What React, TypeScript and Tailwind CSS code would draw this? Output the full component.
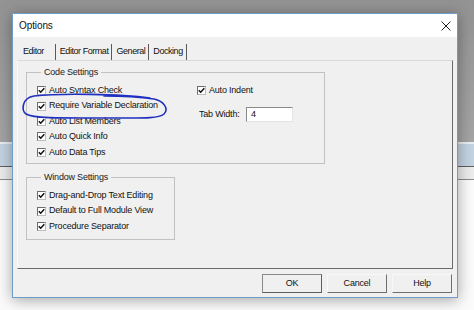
import React from 'react';

const font = { fontFamily: '"Liberation Sans", Arial, sans-serif' };

function Check({ label }: { label: string }) {
  return (
    <div className="flex items-center h-[15.4px]">
      <span className="w-[9px] h-[9px] border border-[#6e6e6e] border-b-[#bdbdbd] border-r-[#bdbdbd] bg-white flex items-center justify-center shrink-0">
        <svg width="7" height="7" viewBox="0 0 7 7">
          <path d="M0.8 3.2 L2.7 5.2 L6.3 1.2" fill="none" stroke="#111" strokeWidth="1.5" />
        </svg>
      </span>
      <span className="ml-[3px] whitespace-nowrap">{label}</span>
    </div>
  );
}

function Group({ title, className, children }: { title: string; className: string; children: React.ReactNode }) {
  return (
    <fieldset className={`border border-[#c2c2c2] ${className}`}>
      <legend className="ml-[4px] px-[3px] leading-[11px] text-[#222]">{title}</legend>
      {children}
    </fieldset>
  );
}

function Button({ label, primary }: { label: string; primary?: boolean }) {
  return (
    <button
      className={`w-[60px] h-[19px] bg-[#f0f0f0] border ${
        primary
          ? 'border-[#5e5e5e] border-t-[#8a8a8a] border-l-[#8a8a8a]'
          : 'border-[#f8f8f8] border-b-[#6e6e6e] border-r-[#6e6e6e]'
      } text-[#111]`}
    >
      {label}
    </button>
  );
}

export default function App() {
  const tabs = ['Editor', 'Editor Format', 'General', 'Docking'];

  return (
    <div className="relative w-[474px] h-[310px] overflow-hidden bg-white" style={font}>
      {/* desktop behind the dialog */}
      <div className="flex flex-col h-full">
        <div className="h-[142px] bg-gradient-to-b from-[#939393] to-[#a4a4a4]" />
        <div className="h-[2px] bg-[#e8eef4]" />
        <div className="h-[22px] bg-[#c4d3e1]" />
        <div className="h-[1px] bg-[#5f5f5f]" />
        <div className="h-[12px] bg-[#ececec]" />
        <div className="h-[1px] bg-[#8a8a8a]" />
        <div className="flex-1 bg-[#fbfbfb]" />
      </div>

      {/* Options dialog */}
      <div className="absolute left-[12px] top-[13px] w-[446px] h-[285px] border border-[#6f9bc8] bg-[#f0f0f0] shadow-[0_2px_14px_rgba(0,0,0,0.35)] flex flex-col text-[9px] tracking-[-0.2px] text-[#111]">
        <div className="h-[23px] bg-white flex items-center justify-between pl-[6px] pr-[6px] shrink-0">
          <span className="text-[10px] tracking-[-0.1px] text-[#111]">Options</span>
          <svg width="10" height="10" viewBox="0 0 10 10">
            <path d="M0.5 0.5 L9.5 9.5 M9.5 0.5 L0.5 9.5" stroke="#222" strokeWidth="1" />
          </svg>
        </div>

        <div className="flex flex-col px-[4px] pt-[7px]">
          {/* tabs */}
          <div className="flex h-[16px] items-stretch pl-[1px] tracking-[-0.45px]">
            {tabs.map((t, i) => (
              <div
                key={t}
                className={`flex items-center border-r border-r-[#5a5a5a] ${i === 0 ? 'pl-[5px] pr-[11px]' : 'pl-[4px] pr-[3px]'}`}
              >
                <span className="whitespace-nowrap">{t}</span>
              </div>
            ))}
          </div>

          {/* tab panel */}
          <div className="h-[209px] w-[436px] border border-t-[#dadada] border-l-[#fafafa] border-r-[#6a6a6a] border-b-[#6a6a6a] pl-[8px] pt-[6px]">
            <Group title="Code Settings" className="w-[299px] h-[97px] pl-[10px] pt-[5px]">
              <div className="flex">
                <div className="w-[160px] flex flex-col">
                  <Check label="Auto Syntax Check" />
                  <Check label="Require Variable Declaration" />
                  <Check label="Auto List Members" />
                  <Check label="Auto Quick Info" />
                  <Check label="Auto Data Tips" />
                </div>
                <div className="flex flex-col">
                  <Check label="Auto Indent" />
                  <div className="flex items-center mt-[9px] pl-[2px]">
                    <span className="w-[47px] whitespace-nowrap">Tab Width:</span>
                    <div className="w-[47px] h-[15px] bg-white border border-[#8a8a8a] border-b-[#e4e4e4] border-r-[#e4e4e4] flex items-center pl-[4px]">
                      4
                    </div>
                  </div>
                </div>
              </div>
            </Group>

            <Group title="Window Settings" className="w-[149px] h-[68px] mt-[8px] pl-[10px] pt-[5px]">
              <Check label="Drag-and-Drop Text Editing" />
              <Check label="Default to Full Module View" />
              <Check label="Procedure Separator" />
            </Group>
          </div>

          {/* buttons */}
          <div className="flex justify-end gap-[5px] pt-[5px] pr-[1px]">
            <Button label="OK" primary />
            <Button label="Cancel" />
            <Button label="Help" />
          </div>
        </div>
      </div>

      {/* hand-drawn annotation */}
      <svg className="absolute left-0 top-0 pointer-events-none" width="474" height="310" viewBox="0 0 474 310">
        <path
          d="M150 98 C 120 94, 60 93, 34 96 C 22 98, 21 110, 26 114 C 34 119, 70 118, 110 118 C 140 118, 158 119, 164 114 C 169 109, 164 101, 154 99 C 140 97, 120 96, 104 96"
          fill="none"
          stroke="#1f2fbf"
          strokeWidth="1.6"
          strokeLinecap="round"
        />
      </svg>
    </div>
  );
}
